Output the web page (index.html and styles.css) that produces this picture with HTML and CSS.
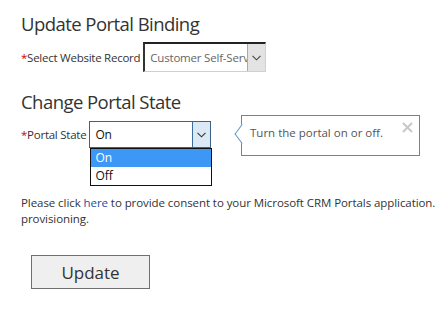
FILE: index.html
```html
<!DOCTYPE html>
<html>
<head>
<meta charset="utf-8">
<link rel="stylesheet" href="styles.css">
</head>
<body>
<div class="page">
  <h2 class="heading h1">Update Portal Binding</h2>
  <div class="row row-bind">
    <span class="label"><span class="req">*</span>Select Website Record</span>
    <div class="select select-site">
      <span class="select-text">Customer Self-Service</span>
      <span class="select-btn">
        <svg width="9" height="6" viewBox="0 0 9 6"><path d="M0.5 0.8 L4.5 4.8 L8.5 0.8" fill="none" stroke="#444" stroke-width="1.1"/></svg>
      </span>
    </div>
  </div>

  <h2 class="heading h2">Change Portal State</h2>
  <div class="row row-state">
    <span class="label"><span class="req">*</span>Portal State</span>
    <div class="select-wrap">
      <div class="select select-state">
        <span class="select-text dark">On</span>
        <span class="select-btn blue">
          <svg width="9" height="6" viewBox="0 0 9 6"><path d="M0.5 0.8 L4.5 4.8 L8.5 0.8" fill="none" stroke="#333" stroke-width="1.1"/></svg>
        </span>
      </div>
      <ul class="options">
        <li class="opt selected">On</li>
        <li class="opt">Off</li>
      </ul>
    </div>
    <div class="tooltip">
      <span class="tip-arrow"></span>
      <span class="tip-text">Turn the portal on or off.</span>
      <svg class="tip-close" width="11" height="11" viewBox="0 0 11 11"><path d="M1 1 L10 10 M10 1 L1 10" stroke="#c8c8c8" stroke-width="2"/></svg>
    </div>
  </div>

  <p class="consent">Please click <a class="link" href="#">here</a> to provide consent to your Microsoft CRM Portals application. provisioning.</p>

  <button class="update">Update</button>
</div>
</body>
</html>
```

FILE: styles.css
```css
* { box-sizing: border-box; }
html, body { margin: 0; padding: 0; background: #fff; }
body {
  font-family: "Open Sans", "Noto Sans", sans-serif;
  color: #333;
  width: 439px;
  height: 317px;
  overflow: hidden;
}
.page {
  padding: 11px 0 0 21px;
  display: flex;
  flex-direction: column;
  align-items: flex-start;
}
.heading {
  margin: 0;
  font-weight: 400;
  font-size: 18.5px;
  line-height: 26px;
  color: #333;
  letter-spacing: -0.55px;
}
.row {
  display: flex;
  align-items: center;
}
.row-bind { margin-top: 5px; }
.label {
  font-size: 11.5px;
  color: #333;
  letter-spacing: -0.25px;
  margin-right: 3px;
}
.req { color: #c00; }
.select {
  display: flex;
  align-items: stretch;
  background: #fff;
  overflow: hidden;
}
.select-site {
  width: 123px;
  height: 30px;
  border-top: 2px solid #222;
  border-left: 2px solid #333;
  border-right: 1px solid #d0d0d0;
  border-bottom: 1px solid #d0d0d0;
}
.select-text {
  flex: 1;
  min-width: 0;
  white-space: nowrap;
  overflow: hidden;
  font-size: 11.5px;
  letter-spacing: -0.2px;
  color: #666;
  padding-left: 5px;
  display: flex;
  align-items: center;
}
.select-text.dark { color: #111; padding-left: 5px; font-size: 12px; }
.select-btn {
  width: 18px;
  flex: none;
  background: #e3e3e3;
  border-left: 1px solid #aaa;
  display: flex;
  align-items: center;
  justify-content: center;
}
.select-btn.blue {
  background: #dbe8f5;
  border-left: 1px solid #3c6d9c;
}
.h2 { margin-top: 17px; }
.row-state {
  margin-top: 6px;
  position: relative;
}
.select-wrap { position: relative; }
.select-state {
  width: 122px;
  height: 27px;
  border: 1px solid #3f6185;
}
.options {
  position: absolute;
  left: 1px;
  top: 27px;
  width: 122px;
  margin: 0;
  padding: 0;
  list-style: none;
  border: 1px solid #111;
  background: #fff;
  z-index: 2;
}
.opt {
  height: 18px;
  line-height: 18px;
  font-size: 12px;
  padding-left: 4px;
  color: #111;
}
.opt.selected { background: #3c98f4; color: #fff; }
.tooltip {
  position: absolute;
  left: 220px;
  top: -6px;
  width: 179px;
  height: 41px;
  border: 1px solid #4b8fc0;
  background: #fff;
  display: flex;
  align-items: flex-start;
  padding: 9px 0 0 8px;
}
.tip-arrow {
  position: absolute;
  left: -7px;
  top: 11px;
  width: 14px;
  height: 14px;
  background: #fff;
  border-left: 1px solid #4b8fc0;
  border-bottom: 1px solid #4b8fc0;
  transform: scaleX(0.75) rotate(45deg);
}
.tip-text {
  position: relative;
  font-size: 11.5px;
  color: #555;
  letter-spacing: 0;
}
.tip-close {
  position: absolute;
  right: 6px;
  top: 6px;
}
.consent {
  margin: 47px 0 0;
  width: 420px;
  font-size: 11.5px;
  line-height: 16px;
  letter-spacing: -0.07px;
  color: #333;
}
.link { color: #1a4fa8; text-decoration: none; }
.update {
  margin: 28px 0 0 10px;
  width: 119px;
  height: 34px;
  background: #efefef;
  border: 1px solid #707070;
  font-family: "Open Sans", "Noto Sans", sans-serif;
  font-size: 17px;
  color: #333;
  padding: 0;
}
```
